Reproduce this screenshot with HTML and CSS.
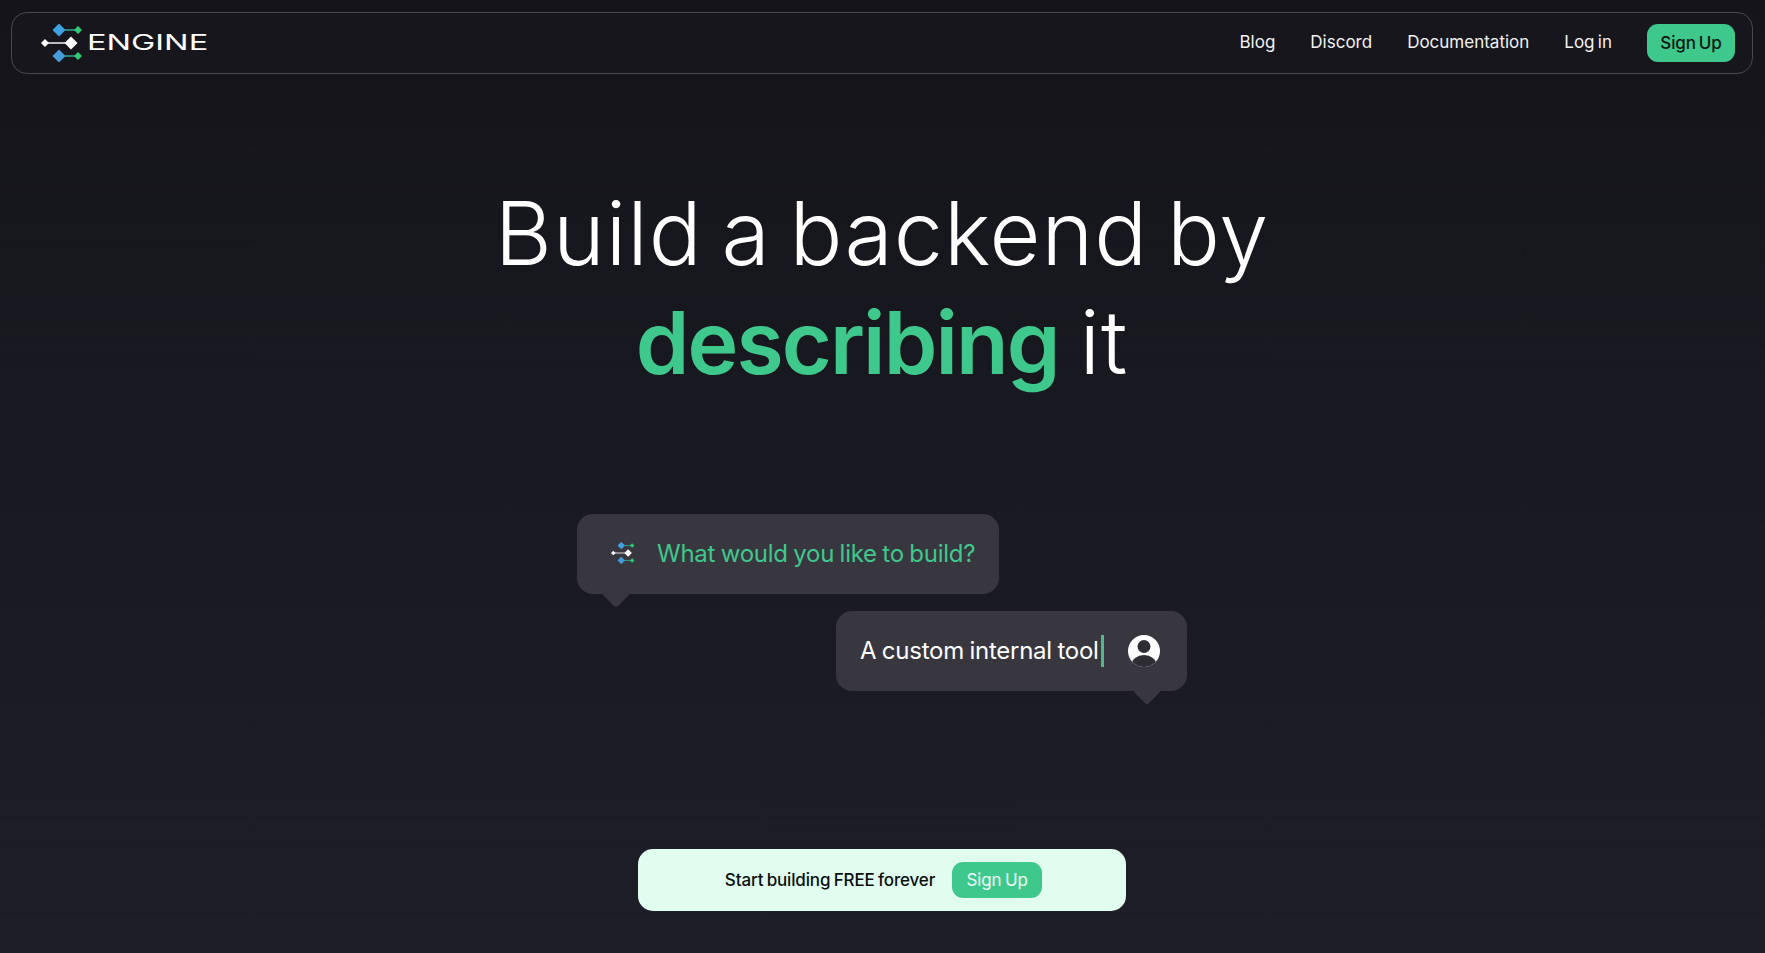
FILE: index.html
```html
<!DOCTYPE html>
<html lang="en">
<head>
  <meta charset="UTF-8" />
  <title>Engine</title>
  <link rel="stylesheet" href="styles.css">
</head>
<body>
  <svg class="defs" width="0" height="0">
    <defs>
      <linearGradient id="blue" x1="0" y1="0" x2="1" y2="1">
        <stop offset="0" stop-color="#3aa6e6" />
        <stop offset="1" stop-color="#4a97d8" />
      </linearGradient>
      <symbol id="logo" viewBox="0 0 42 38">
        <path d="M18 6H37M18 32H37" stroke="#2fa98a" stroke-width="1.6" />
        <path d="M4 19H30" stroke="#e8e8e8" stroke-width="1.6" />
        <path d="M18 -0.500L24.500 6L18 12.500L11.500 6Z M18 25.500L24.500 32L18 38.500L11.500 32Z" fill="url(#blue)" />
        <path d="M37 2L41 6L37 10L33 6Z M37 28L41 32L37 36L33 32Z" fill="#2fcb72" />
        <path d="M4 15L8 19L4 23L0 19Z M30 12.500L36.500 19L30 25.500L23.500 19Z" fill="#fff" />
      </symbol>
    </defs>
  </svg>

  <nav class="navbar">
    <a class="brand" href="#">
      <svg class="brand-icon"><use href="#logo" /></svg>
      <span class="brand-name">ENGINE</span>
    </a>
    <div class="nav-links">
      <a href="#">Blog</a>
      <a href="#">Discord</a>
      <a href="#">Documentation</a>
      <a href="#">Log in</a>
      <a class="btn btn-dark" href="#">Sign Up</a>
    </div>
  </nav>

  <main class="hero">
    <h1>Build a backend by<br><strong>describing</strong> it</h1>

    <div class="chat">
      <div class="bubble bubble-left">
        <svg class="bubble-icon"><use href="#logo" /></svg>
        <span>What would you like to build?</span>
      </div>
      <div class="bubble bubble-right">
        <span class="typed">A custom internal tool</span>
        <span class="cursor"></span>
        <svg class="avatar" viewBox="0 0 32 32">
          <defs>
            <clipPath id="round"><circle cx="16" cy="16" r="16" /></clipPath>
          </defs>
          <circle cx="16" cy="16" r="16" fill="#fff" />
          <g clip-path="url(#round)" fill="#2e2d33">
            <circle cx="16" cy="11.500" r="6.500" />
            <ellipse cx="16" cy="30" rx="12.500" ry="10" />
          </g>
        </svg>
      </div>
    </div>

    <div class="cta">
      <span>Start building FREE forever</span>
      <a class="btn btn-light" href="#">Sign Up</a>
    </div>
  </main>
</body>
</html>
```

FILE: styles.css
```css
* {
  box-sizing: border-box;
  margin: 0;
  padding: 0;
}

html, body {
  height: 100%;
}

body {
  background: linear-gradient(180deg, #14141a 0%, #1e1e28 100%);
  font-family: 'Inter', sans-serif;
  color: #fff;
  padding: 12px 12px 0 11px;
  overflow: hidden;
}

a {
  color: inherit;
  text-decoration: none;
}

.defs {
  position: absolute;
}

.navbar {
  display: flex;
  justify-content: space-between;
  align-items: center;
  height: 62px;
  padding: 0 17px 0 29px;
  border: 1px solid #48484e;
  border-radius: 16px;
  background: #16161c;
}

.brand {
  display: flex;
  align-items: center;
  gap: 4px;
}

.brand-icon {
  width: 42px;
  height: 38px;
  overflow: visible;
}

.brand-name {
  font-size: 21px;
  font-weight: 400;
  display: inline-block;
  margin-bottom: 2px;
  transform: scaleX(1.55);
  transform-origin: left center;
}

.nav-links {
  display: flex;
  align-items: center;
  gap: 35px;
  font-size: 17px;
  word-spacing: -1.500px;
  color: #f2f2f2;
}

.nav-links a:not(.btn) {
  margin-bottom: 2px;
}

.btn {
  display: inline-flex;
  align-items: center;
  justify-content: center;
  background: #3fc88c;
  border-radius: 11px;
}

.btn-dark {
  width: 88px;
  height: 38px;
  color: #0d1512;
  font-weight: 500;
  letter-spacing: -0.1px;
}

.hero {
  display: flex;
  flex-direction: column;
  align-items: center;
}

h1 {
  margin-top: 105px;
  font-size: 88px;
  line-height: 109px;
  font-weight: 350;
  letter-spacing: 1px;
  word-spacing: -7px;
  text-align: center;
}

h1 strong {
  color: #3fc88c;
  font-size: 86px;
  font-weight: 600;
  letter-spacing: -1.9px;
  margin-right: 2px;
}

.chat {
  width: 610px;
  margin-top: 116px;
  display: flex;
  flex-direction: column;
  gap: 17px;
}

.bubble {
  position: relative;
  display: flex;
  align-items: center;
  height: 80px;
  background: #38373f;
  border-radius: 16px;
  font-size: 24px;
  letter-spacing: -0.25px;
  word-spacing: -1px;
}

.bubble::after {
  content: "";
  position: absolute;
  bottom: -10px;
  width: 20px;
  height: 20px;
  background: #38373f;
  border-radius: 3px;
  transform: rotate(45deg);
}

.bubble-left {
  align-self: flex-start;
  width: 422px;
  padding: 0 0 2px 34px;
  color: #3fc88c;
}

.bubble-left::after {
  left: 29px;
}

.bubble-icon {
  width: 24px;
  height: 22px;
  margin-right: 22px;
}

.bubble-right {
  align-self: flex-end;
  width: 351px;
  padding-left: 24px;
}

.bubble-right::after {
  right: 30px;
}

.typed {
  margin-bottom: 2px;
}

.cursor {
  width: 3px;
  height: 32px;
  margin-left: 2px;
  background: #4fb98c;
}

.avatar {
  width: 32px;
  height: 32px;
  margin-left: 24px;
}

.cta {
  display: flex;
  align-items: center;
  justify-content: center;
  gap: 17px;
  width: 488px;
  height: 62px;
  margin-top: 158px;
  padding-left: 3px;
  background: #e0fdf0;
  border-radius: 15px;
  color: #0b0f0d;
  font-size: 17px;
  font-weight: 500;
  letter-spacing: -0.15px;
  word-spacing: -1px;
}

.btn-light {
  width: 90px;
  height: 36px;
  color: #f0fff8;
  font-weight: 400;
  font-size: 17px;
  word-spacing: -1.2px;
  letter-spacing: -0.1px;
}
```
